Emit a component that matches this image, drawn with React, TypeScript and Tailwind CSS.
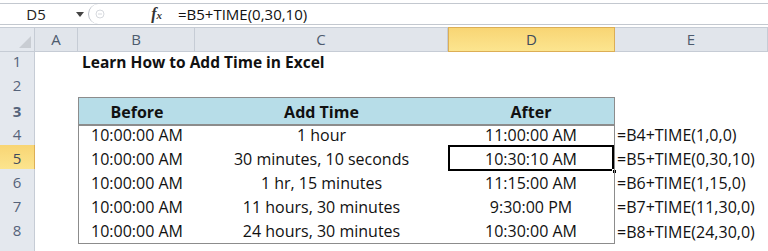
import React from "react";

const cols = "grid grid-cols-[35px_43px_117px_253px_167px_153px]";
const font = { fontFamily: '"Open Sans", "Liberation Sans", sans-serif' };

const rows = [
  ["10:00:00 AM", "1 hour", "11:00:00 AM", "=B4+TIME(1,0,0)"],
  ["10:00:00 AM", "30 minutes, 10 seconds", "10:30:10 AM", "=B5+TIME(0,30,10)"],
  ["10:00:00 AM", "1 hr, 15 minutes", "11:15:00 AM", "=B6+TIME(1,15,0)"],
  ["10:00:00 AM", "11 hours, 30 minutes", "9:30:00 PM", "=B7+TIME(11,30,0)"],
  ["10:00:00 AM", "24 hours, 30 minutes", "10:30:00 AM", "=B8+TIME(24,30,0)"],
];

function RowHead({ n, active }: { n: number | string; active?: boolean }) {
  return (
    <div
      className={
        "h-full flex items-center justify-center pt-[1px] text-[15px] border-b border-r " +
        (active
          ? "bg-gradient-to-b from-[#f8d574] to-[#fce58f] border-[#dcae55] text-[#3f4b5c]"
          : "bg-[#e4e8ee] border-[#c6ccd5] text-[#55637a]")
      }
    >
      {n}
    </div>
  );
}

export default function App() {
  return (
    <div className="w-[768px] h-[251px] overflow-hidden bg-white text-[#111]" style={font}>
      {/* formula bar */}
      <div className="mt-[3px] h-[22px] flex items-center border-y border-[#c3c8cf] bg-white">
        <div className="w-[72px] text-center text-[15px] text-[#222]">D5</div>
        <div className="w-[16px] flex justify-center">
          <svg width="8" height="5" viewBox="0 0 8 5"><path d="M0 0h8L4 5z" fill="#444" /></svg>
        </div>
        <div className="h-full w-[82px] flex items-center rounded-l-full border-l border-[#b9bec6] pl-[6px]">
          <svg width="10" height="10" viewBox="0 0 10 10">
            <circle cx="5" cy="5" r="4" fill="none" stroke="#d6d9de" strokeWidth="1" />
            <path d="M3 5h4" stroke="#d6d9de" />
          </svg>
          <span className="ml-auto mr-[8px] text-[16px] italic font-bold text-[#333]" style={{ fontFamily: '"Liberation Serif", serif' }}>
            f<span className="text-[11px]">x</span>
          </span>
        </div>
        <div className="pl-[8px] text-[15px] text-[#111]">=B5+TIME(0,30,10)</div>
      </div>

      {/* column headers */}
      <div className={cols + " mt-[2px] h-[22px] text-[15px] text-[#4d5b6e]"}>
        <div className="relative bg-[#e4e8ee] border-r border-b border-t border-[#c6ccd5]">
          <svg className="absolute right-[3px] bottom-[3px]" width="12" height="12" viewBox="0 0 12 12">
            <path d="M12 0V12H0z" fill="#c9cdd3" />
          </svg>
        </div>
        {["A", "B", "C"].map((c) => (
          <div key={c} className="flex items-center justify-center bg-[#e1e5eb] border-r border-b border-t border-[#c6ccd5]">{c}</div>
        ))}
        <div className="flex items-center justify-center bg-gradient-to-b from-[#f8d574] to-[#fce58f] border border-[#dcae55] text-[#3f4b5c]">D</div>
        <div className="flex items-center justify-center bg-[#e1e5eb] border-r border-b border-t border-[#c6ccd5]">E</div>
      </div>

      {/* row 1 */}
      <div className={cols + " h-[24px] text-[16px]"}>
        <RowHead n={1} />
        <div />
        <div className="col-span-4 flex items-center pt-[2px] pl-[4px] font-bold text-[15.5px] whitespace-nowrap">Learn How to Add Time in Excel</div>
      </div>

      {/* row 2 */}
      <div className={cols + " h-[24px]"}>
        <RowHead n={2} />
      </div>

      {/* row 3 header */}
      <div className={cols + " h-[24px] font-bold text-[16px]"}>
        <RowHead n={3} />
        <div />
        <div className="flex items-center justify-center pt-[2px] bg-[#b7dde8] border-l border-t border-b-2 border-[#8c8c8c]">Before</div>
        <div className="flex items-center justify-center pt-[2px] bg-[#b7dde8] border-t border-b-2 border-[#8c8c8c]">Add Time</div>
        <div className="flex items-center justify-center pt-[2px] bg-[#b7dde8] border-t border-r border-b-2 border-[#8c8c8c]">After</div>
        <div />
      </div>

      {rows.map((r, i) => {
        const last = i === rows.length - 1;
        const sel = i === 1;
        return (
          <div key={i} className={cols + " h-[24px] text-[16px] whitespace-nowrap"}>
            <RowHead n={i + 4} active={sel} />
            <div />
            <div className={"flex items-center justify-center pt-[2px] border-l border-[#8c8c8c] " + (last ? "border-b" : "")}>{r[0]}</div>
            <div className={"flex items-center justify-center pt-[2px] border-[#8c8c8c] " + (last ? "border-b" : "")}>{r[1]}</div>
            <div className={"relative flex items-center justify-center pt-[2px] border-r border-[#8c8c8c] " + (last ? "border-b" : "")}>
              {sel && (
                <>
                  <div className="absolute inset-0 border-2 border-black" />
                  <div className="absolute right-[-3px] bottom-[-3px] w-[5px] h-[5px] bg-black border border-white" />
                </>
              )}
              <span className="relative">{r[2]}</span>
            </div>
            <div className="flex items-center pt-[2px] pl-[2px]">{r[3]}</div>
          </div>
        );
      })}

      <div className={cols + " h-[24px]"}>
        <RowHead n="" />
      </div>
    </div>
  );
}
